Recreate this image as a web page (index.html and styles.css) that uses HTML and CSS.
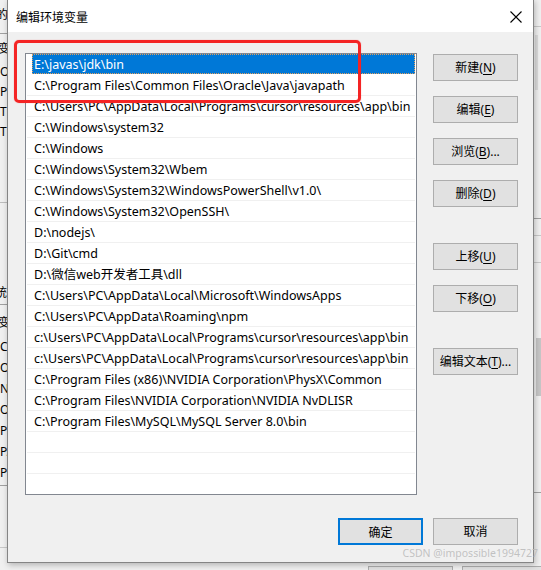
FILE: index.html
```html
<!DOCTYPE html>
<html lang="zh-CN">
<head>
<meta charset="utf-8">
<link rel="stylesheet" href="styles.css">
</head>
<body>
<div class="desk">
  <div class="bgwin bg-left">
    <div class="bg-inner">
      <div class="bg-title">的</div>
      <div class="bg-head">变</div>
      <div class="bg-row">On</div>
      <div class="bg-row">Pa</div>
      <div class="bg-row">TE</div>
      <div class="bg-row">TM</div>
      <div class="bg-sep1"></div>
      <div class="bg-title2">统</div>
      <div class="bg-head2">变</div>
      <div class="bg-row2">Co</div>
      <div class="bg-row2">On</div>
      <div class="bg-row2">NU</div>
      <div class="bg-row2">OS</div>
      <div class="bg-row2">Pa</div>
      <div class="bg-row2">PA</div>
      <div class="bg-row2">PR</div>
      <div class="bg-end"></div>
    </div>
  </div>
  <div class="bgwin bg-right">
    <div class="br-a"></div>
    <div class="br-scroll"></div>
    <div class="br-b"></div>
    <div class="br-c"></div>
    <div class="br-d"></div>
    <div class="br-thumb"></div>
    <div class="br-e"></div>
  </div>
  <div class="bgwin bg-bottom">
    <div class="bb-btn"></div>
    <div class="bb-btn"></div>
  </div>

  <div class="dialog">
    <div class="titlebar">
      <span class="title">编辑环境变量</span>
      <svg class="close" width="12" height="12" viewBox="0 0 12 12"><path d="M0.5 0.5 L11.5 11.5 M11.5 0.5 L0.5 11.5" stroke="#000" stroke-width="1.1" fill="none"/></svg>
    </div>
    <div class="content">
      <div class="main">
        <div class="list">
          <div class="row sel"><span class="selbox">E:\javas\jdk\bin</span></div>
          <div class="row">C:\Program Files\Common Files\Oracle\Java\javapath</div>
          <div class="row">C:\Users\PC\AppData\Local\Programs\cursor\resources\app\bin</div>
          <div class="row">C:\Windows\system32</div>
          <div class="row">C:\Windows</div>
          <div class="row">C:\Windows\System32\Wbem</div>
          <div class="row">C:\Windows\System32\WindowsPowerShell\v1.0\</div>
          <div class="row">C:\Windows\System32\OpenSSH\</div>
          <div class="row">D:\nodejs\</div>
          <div class="row">D:\Git\cmd</div>
          <div class="row">D:\微信web开发者工具\dll</div>
          <div class="row">C:\Users\PC\AppData\Local\Microsoft\WindowsApps</div>
          <div class="row">C:\Users\PC\AppData\Roaming\npm</div>
          <div class="row">c:\Users\PC\AppData\Local\Programs\cursor\resources\app\bin</div>
          <div class="row">c:\Users\PC\AppData\Local\Programs\cursor\resources\app\bin</div>
          <div class="row">C:\Program Files (x86)\NVIDIA Corporation\PhysX\Common</div>
          <div class="row">C:\Program Files\NVIDIA Corporation\NVIDIA NvDLISR</div>
          <div class="row">C:\Program Files\MySQL\MySQL Server 8.0\bin</div>
          <div class="row"></div>
          <div class="row"></div>
          <div class="row last"></div>
        </div>
        <div class="side">
          <button class="btn">新建(<u>N</u>)</button>
          <button class="btn">编辑(<u>E</u>)</button>
          <button class="btn">浏览(<u>B</u>)...</button>
          <button class="btn">删除(<u>D</u>)</button>
          <button class="btn gap">上移(<u>U</u>)</button>
          <button class="btn">下移(<u>O</u>)</button>
          <button class="btn gap">编辑文本(<u>T</u>)...</button>
        </div>
      </div>
      <div class="footer">
        <button class="btn ok">确定</button>
        <button class="btn">取消</button>
      </div>
    </div>
  </div>

  <div class="highlight"></div>
  <div class="watermark">CSDN @impossible1994727</div>
</div>
</body>
</html>
```
FILE: styles.css
```css
* { box-sizing: border-box; }
html, body { margin: 0; padding: 0; }
body {
  width: 541px;
  height: 570px;
  overflow: hidden;
  background: #f0f0f0;
  font-family: "Noto Sans", "Noto Sans CJK SC", sans-serif;
  font-size: 12px;
  color: #000;
}
.desk { position: relative; width: 541px; height: 570px; overflow: hidden; background: #f0f0f0; }

.bgwin { position: absolute; }
.bg-left { left: 0; top: 0; width: 7px; height: 570px; overflow: hidden; font-size: 12px; line-height: 20px; color: #000; }
.bg-inner { width: 20px; margin-left: -2px; }
.bg-title { height: 34px; padding-top: 5px; margin-left: -2px; border-bottom: 1px solid #a0a0a0; white-space: nowrap; }
.bg-head { height: 28px; padding-top: 5px; }
.bg-row { height: 20px; padding-left: 2px; white-space: nowrap; }
.bg-sep1 { height: 61px; border-bottom: 1px solid #bdbdbd; }
.bg-title2 { height: 102px; padding-top: 80px; margin-left: -3px; border-bottom: 1px solid #a0a0a0; white-space: nowrap; }
.bg-head2 { height: 31px; padding-top: 8px; }
.bg-row2 { height: 21px; line-height: 21px; padding-left: 2px; white-space: nowrap; }
.bg-end { height: 63px; margin-top: 2px; border-top: 1px solid #a0a0a0; border-bottom: 1px solid #c8c8c8; }

.bg-right { left: 533px; top: 0; width: 10px; height: 570px; }
.br-a { height: 27px; border-bottom: 1px solid #c8c8c8; }
.br-scroll { height: 55px; margin-top: 8px; width: 3px; margin-left: 2px; background: #dcdcdc; }
.br-b { height: 129px; border-bottom: 1px solid #a0a0a0; }
.br-c { height: 17px; border-bottom: 1px solid #c8c8c8; }
.br-d { height: 27px; border-bottom: 1px solid #c8c8c8; }
.br-thumb { height: 58px; margin-top: 75px; margin-left: 3px; background: #c6c6c6; }
.br-e { height: 97px; margin-top: 0; border-bottom: 1px solid #a0a0a0; }

.bg-bottom { left: 368px; top: 566px; display: flex; gap: 9px; }
.bb-btn { width: 85px; height: 10px; border: 1px solid #adadad; background: #e1e1e1; }

.dialog {
  position: absolute;
  left: 7px;
  top: -1px;
  width: 527px;
  height: 564px;
  background: #f0f0f0;
  border: 1px solid #858585;
  box-shadow: 1px 2px 6px rgba(0,0,0,0.25);
  display: flex;
  flex-direction: column;
}
.titlebar {
  height: 32px;
  background: #fff;
  display: flex;
  align-items: center;
  justify-content: space-between;
  padding: 0 11px 0 8px;
  flex: none;
}
.title { font-size: 12px; padding-top: 1px; }
.close { display: block; margin-top: 1px; }

.content { flex: 1; display: flex; flex-direction: column; }
.main { display: flex; padding: 21px 0 0 17px; }
.list {
  width: 392px;
  height: 442px;
  background: #fff;
  border: 1px solid #828790;
  padding: 0 0 0 1px;
  overflow: hidden;
}
.row {
  height: 21px;
  line-height: 22px;
  font-size: 12.5px;
  border-bottom: 1px solid #f0f0f0;
  padding-left: 7px;
  white-space: nowrap;
  overflow: hidden;
  margin-right: 1px;
}
.row.last { border-bottom: none; }
.row.sel { padding-left: 5px; border-bottom-color: #fff; }
.selbox {
  display: block;
  height: 20px;
  line-height: 21px;
  background: #0078d7;
  color: #fff;
  padding-left: 2px;
  outline: 1px dotted #e0a060;
  outline-offset: -1px;
}

.side { display: flex; flex-direction: column; margin-left: 16px; padding-top: 1px; }
.btn {
  width: 85px;
  height: 27px;
  border: 1px solid #adadad;
  background: #e1e1e1;
  font-family: "Noto Sans", "Noto Sans CJK SC", sans-serif;
  font-size: 12px;
  color: #000;
  padding: 0;
  margin: 0 0 15px 0;
  line-height: 25px;
}
.btn u { text-underline-offset: 2px; }
.btn.gap { margin-top: 21px; }

.footer { display: flex; justify-content: flex-end; gap: 10px; padding: 23px 15px 0 0; }
.footer .btn { margin: 0; }
.btn.ok { border: 2px solid #0078d7; width: 85px; }

.highlight {
  position: absolute;
  left: 14px;
  top: 40px;
  width: 347px;
  height: 63px;
  border: 3px solid #f42424;
  border-radius: 5px;
  box-shadow: 0 0 1px rgba(240,40,40,0.6);
}
.watermark {
  position: absolute;
  right: 3px;
  top: 546px;
  font-size: 10.5px;
  color: rgba(185,185,185,0.85);
  font-family: "Noto Sans", sans-serif;
}
```
